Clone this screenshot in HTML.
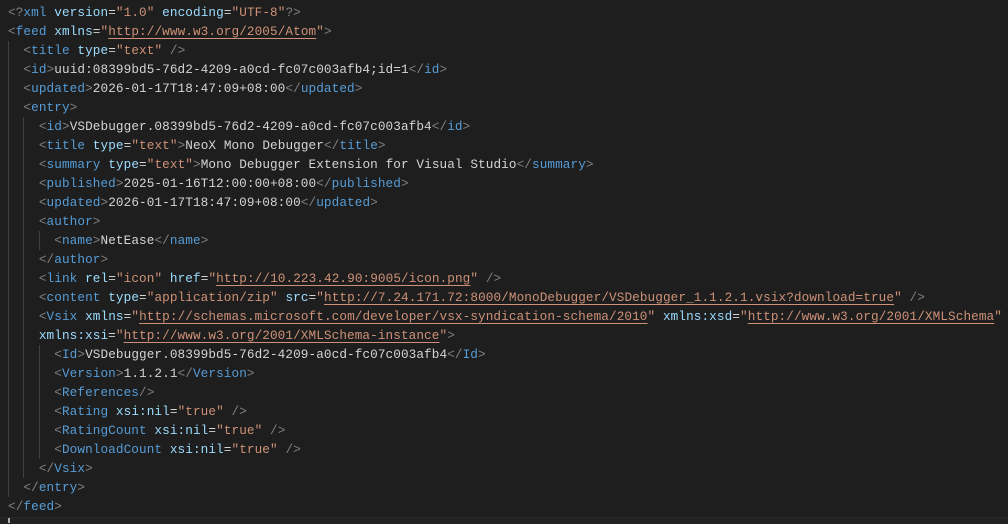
<!DOCTYPE html>
<html><head><meta charset="utf-8"><style>
html,body{margin:0;padding:0;background:#1e1e1e;width:1008px;height:523px;overflow:hidden}
pre{position:absolute;left:8px;top:3px;margin:0;font-family:"Liberation Mono",monospace;font-size:12.7px;letter-spacing:0.09px;line-height:19px;color:#d4d4d4;white-space:pre}
.p{color:#808080}.t{color:#569cd6}.a{color:#9cdcfe}.s{color:#ce9178}
.u{text-decoration:underline;text-decoration-color:#ce9178;text-underline-offset:3px}
.g{position:absolute;width:1px;background:#404040}
</style></head><body>
<div class="g" style="left:8px;top:41px;height:456px"></div>
<div class="g" style="left:23px;top:117px;height:361px"></div>
<div class="g" style="left:39px;top:231px;height:19px"></div>
<div class="g" style="left:39px;top:345px;height:114px"></div>
<div style="position:absolute;left:0;top:517px;width:1008px;height:6px;background:#222;border-top:1px solid #2a2a2a"></div>
<div style="position:absolute;left:8px;top:518px;width:2px;height:5px;background:#aeafad"></div>
<pre><span class="p">&lt;?</span><span class="t">xml</span> <span class="a">version</span>=<span class="s">"1.0"</span> <span class="a">encoding</span>=<span class="s">"UTF-8"</span><span class="p">?&gt;</span>
<span class="p">&lt;</span><span class="t">feed</span> <span class="a">xmlns</span>=<span class="s">"<span class="u">http://www.w3.org/2005/Atom</span>"</span><span class="p">&gt;</span>
  <span class="p">&lt;</span><span class="t">title</span> <span class="a">type</span>=<span class="s">"text"</span> <span class="p">/&gt;</span>
  <span class="p">&lt;</span><span class="t">id</span><span class="p">&gt;</span>uuid:08399bd5-76d2-4209-a0cd-fc07c003afb4;id=1<span class="p">&lt;/</span><span class="t">id</span><span class="p">&gt;</span>
  <span class="p">&lt;</span><span class="t">updated</span><span class="p">&gt;</span>2026-01-17T18:47:09+08:00<span class="p">&lt;/</span><span class="t">updated</span><span class="p">&gt;</span>
  <span class="p">&lt;</span><span class="t">entry</span><span class="p">&gt;</span>
    <span class="p">&lt;</span><span class="t">id</span><span class="p">&gt;</span>VSDebugger.08399bd5-76d2-4209-a0cd-fc07c003afb4<span class="p">&lt;/</span><span class="t">id</span><span class="p">&gt;</span>
    <span class="p">&lt;</span><span class="t">title</span> <span class="a">type</span>=<span class="s">"text"</span><span class="p">&gt;</span>NeoX Mono Debugger<span class="p">&lt;/</span><span class="t">title</span><span class="p">&gt;</span>
    <span class="p">&lt;</span><span class="t">summary</span> <span class="a">type</span>=<span class="s">"text"</span><span class="p">&gt;</span>Mono Debugger Extension for Visual Studio<span class="p">&lt;/</span><span class="t">summary</span><span class="p">&gt;</span>
    <span class="p">&lt;</span><span class="t">published</span><span class="p">&gt;</span>2025-01-16T12:00:00+08:00<span class="p">&lt;/</span><span class="t">published</span><span class="p">&gt;</span>
    <span class="p">&lt;</span><span class="t">updated</span><span class="p">&gt;</span>2026-01-17T18:47:09+08:00<span class="p">&lt;/</span><span class="t">updated</span><span class="p">&gt;</span>
    <span class="p">&lt;</span><span class="t">author</span><span class="p">&gt;</span>
      <span class="p">&lt;</span><span class="t">name</span><span class="p">&gt;</span>NetEase<span class="p">&lt;/</span><span class="t">name</span><span class="p">&gt;</span>
    <span class="p">&lt;/</span><span class="t">author</span><span class="p">&gt;</span>
    <span class="p">&lt;</span><span class="t">link</span> <span class="a">rel</span>=<span class="s">"icon"</span> <span class="a">href</span>=<span class="s">"<span class="u">http://10.223.42.90:9005/icon.png</span>"</span> <span class="p">/&gt;</span>
    <span class="p">&lt;</span><span class="t">content</span> <span class="a">type</span>=<span class="s">"application/zip"</span> <span class="a">src</span>=<span class="s">"<span class="u">http://7.24.171.72:8000/MonoDebugger/VSDebugger_1.1.2.1.vsix?download=true</span>"</span> <span class="p">/&gt;</span>
    <span class="p">&lt;</span><span class="t">Vsix</span> <span class="a">xmlns</span>=<span class="s">"<span class="u">http://schemas.microsoft.com/developer/vsx-syndication-schema/2010</span>"</span> <span class="a">xmlns:xsd</span>=<span class="s">"<span class="u">http://www.w3.org/2001/XMLSchema</span>"</span>
    <span class="a">xmlns:xsi</span>=<span class="s">"<span class="u">http://www.w3.org/2001/XMLSchema-instance</span>"</span><span class="p">&gt;</span>
      <span class="p">&lt;</span><span class="t">Id</span><span class="p">&gt;</span>VSDebugger.08399bd5-76d2-4209-a0cd-fc07c003afb4<span class="p">&lt;/</span><span class="t">Id</span><span class="p">&gt;</span>
      <span class="p">&lt;</span><span class="t">Version</span><span class="p">&gt;</span>1.1.2.1<span class="p">&lt;/</span><span class="t">Version</span><span class="p">&gt;</span>
      <span class="p">&lt;</span><span class="t">References</span><span class="p">/&gt;</span>
      <span class="p">&lt;</span><span class="t">Rating</span> <span class="a">xsi:nil</span>=<span class="s">"true"</span> <span class="p">/&gt;</span>
      <span class="p">&lt;</span><span class="t">RatingCount</span> <span class="a">xsi:nil</span>=<span class="s">"true"</span> <span class="p">/&gt;</span>
      <span class="p">&lt;</span><span class="t">DownloadCount</span> <span class="a">xsi:nil</span>=<span class="s">"true"</span> <span class="p">/&gt;</span>
    <span class="p">&lt;/</span><span class="t">Vsix</span><span class="p">&gt;</span>
  <span class="p">&lt;/</span><span class="t">entry</span><span class="p">&gt;</span>
<span class="p">&lt;/</span><span class="t">feed</span><span class="p">&gt;</span></pre>
</body></html>
